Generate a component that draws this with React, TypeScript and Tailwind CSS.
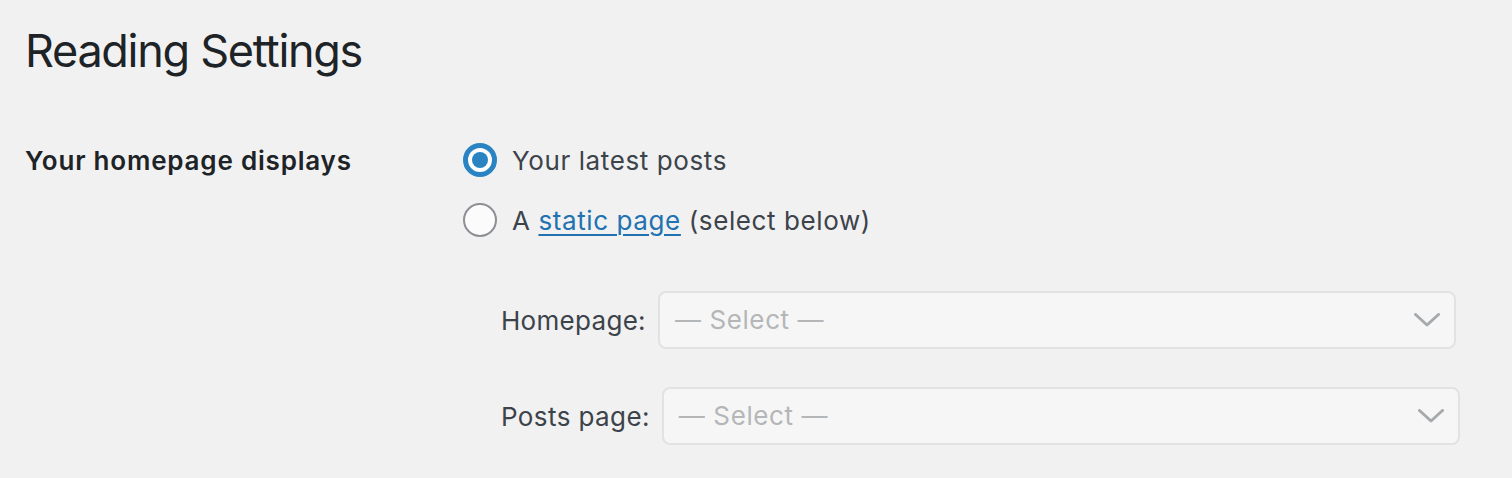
export default function App() {
  const font = { fontFamily: 'Inter, "Noto Sans", sans-serif' };
  const Chevron = () => (
    <svg width="26" height="14" viewBox="0 0 26 14" fill="none">
      <path d="M1.5 1.5 L13 12 L24.5 1.5" stroke="#a7aaad" strokeWidth="3" strokeLinecap="round" strokeLinejoin="round" />
    </svg>
  );
  const Select = () => (
    <div className="w-[798px] h-[58px] ml-[12px] border-2 border-[#e2e2e4] rounded-[8px] bg-[#f6f6f6] flex items-center justify-between pl-[15px] pr-[14px]">
      <span className="text-[26px] text-[#b5b6b8] leading-none tracking-[0.6px]">— Select —</span>
      <Chevron />
    </div>
  );
  return (
    <div className="min-h-screen w-full bg-[#f1f1f1] pl-[25px] pt-[23px]" style={font}>
      <h1 className="text-[45px] leading-[55px] text-[#1d2327] font-normal tracking-[-1.3px]">Reading Settings</h1>
      <div className="flex mt-[62px]">
        <div className="w-[438px] h-[40px] flex items-center">
          <span className="text-[26px] font-semibold text-[#1d2327] tracking-[0.8px]">Your homepage displays</span>
        </div>
        <div className="flex flex-col">
          <div className="h-[40px] flex items-center gap-[15px]">
            <div className="w-[34px] h-[34px] rounded-full border-[5px] border-[#2a83c2] bg-white flex items-center justify-center">
              <div className="w-[16px] h-[16px] rounded-full bg-[#2a83c2]" />
            </div>
            <span className="text-[26px] text-[#3c434a] tracking-[0.6px]">Your latest posts</span>
          </div>
          <div className="h-[40px] mt-[20px] flex items-center gap-[15px]">
            <div className="w-[34px] h-[34px] rounded-full border-2 border-[#8c8f94] bg-[#fbfbfb]" />
            <span className="text-[26px] text-[#3c434a] tracking-[0.6px]">
              A <a className="text-[#2271b1] underline underline-offset-[4px] decoration-[2px]">static page</a> (select below)
            </span>
          </div>
          <div className="pl-[38px] mt-[51px] flex flex-col gap-[38px]">
            <div className="flex items-center">
              <span className="text-[26px] text-[#3c434a] tracking-[0.3px]">Homepage:</span>
              <Select />
            </div>
            <div className="flex items-center">
              <span className="text-[26px] text-[#3c434a] tracking-[0.4px]">Posts page:</span>
              <Select />
            </div>
          </div>
        </div>
      </div>
    </div>
  );
}
